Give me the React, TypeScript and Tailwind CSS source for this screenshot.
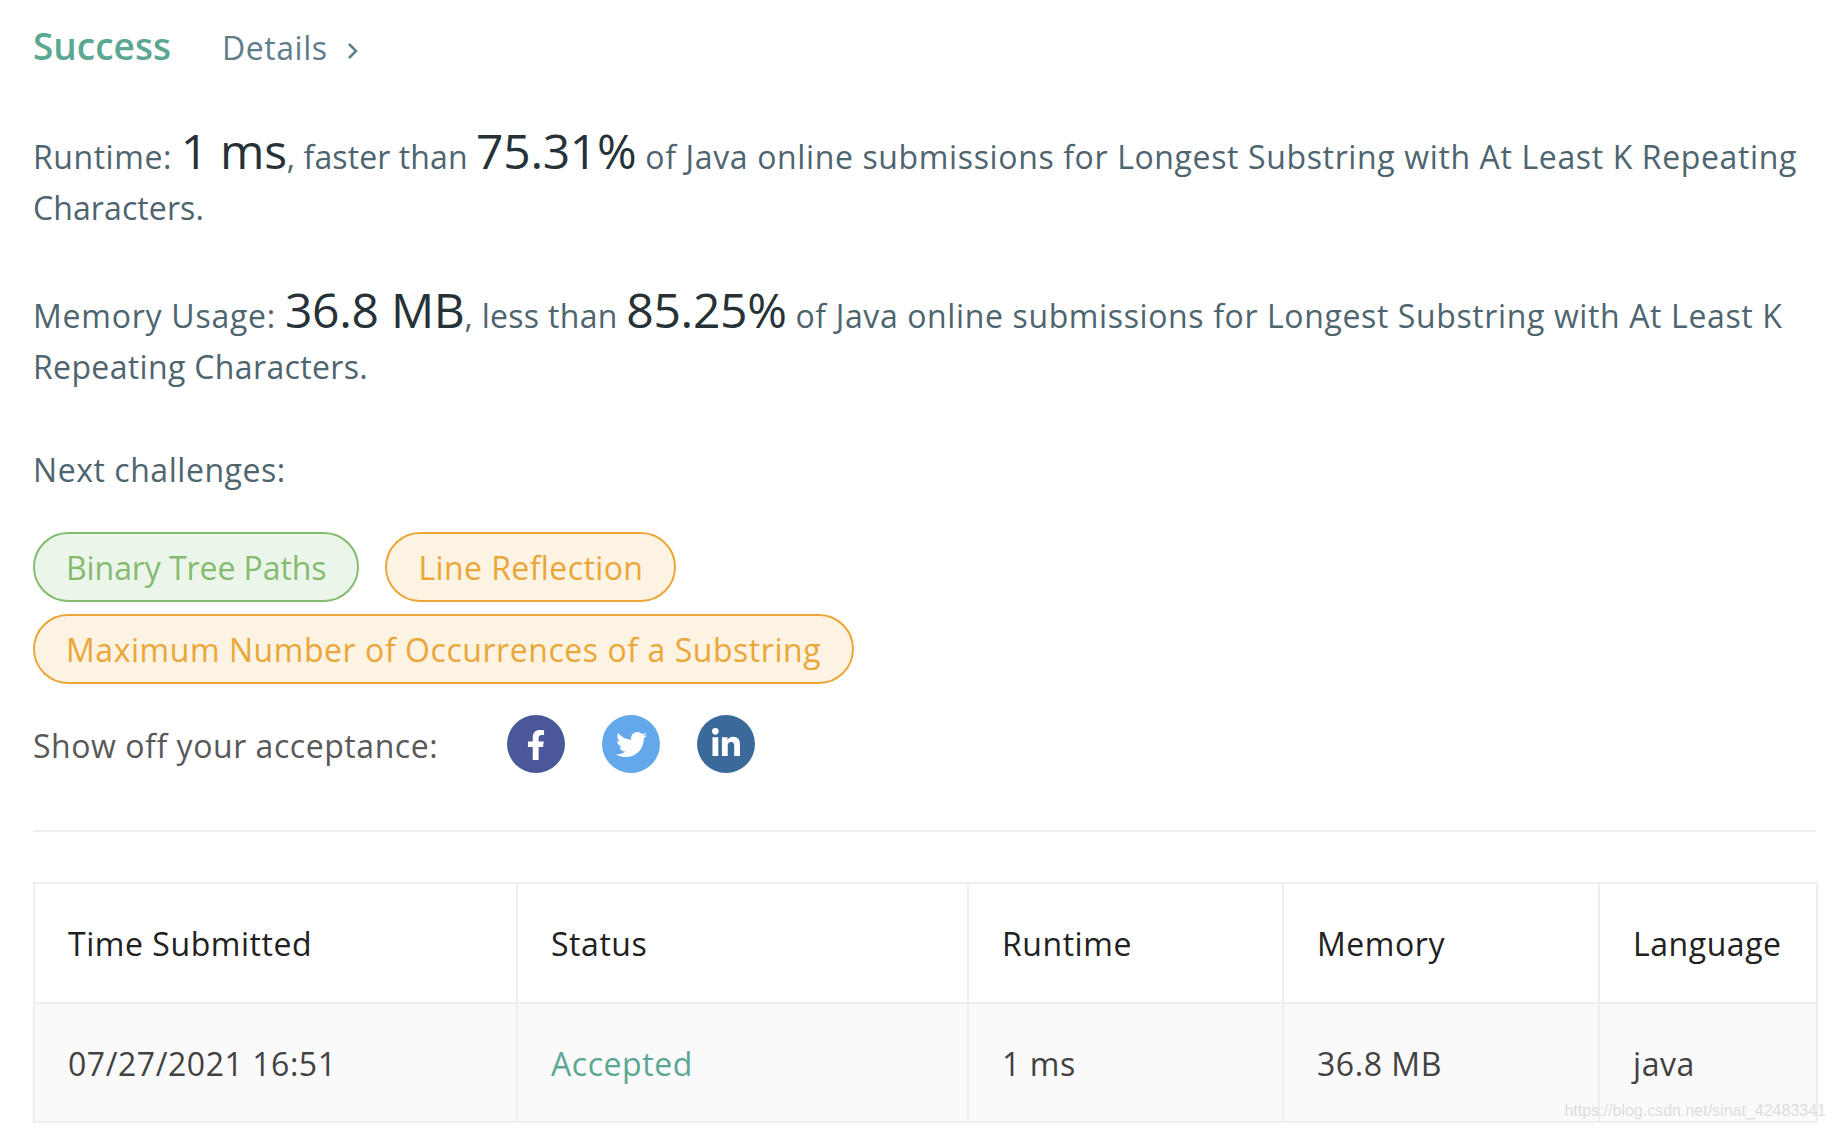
import { FaFacebookF, FaLinkedinIn, FaTwitter } from 'react-icons/fa';

const Big = ({ children }: { children: React.ReactNode }) => (
  <span className="text-[48px] leading-[51px] tracking-[-0.3px] text-[#263238]">{children}</span>
);

const Pill = ({ label, className }: { label: string; className: string }) => (
  <a
    className={`h-[70px] px-[31px] pt-[2px] flex items-center rounded-[35px] border-2 whitespace-nowrap ${className}`}
  >
    {label}
  </a>
);

const App = () => {
  const columns = [
    { title: 'Time Submitted', value: '07/27/2021 16:51', width: 'w-[483px]' },
    { title: 'Status', value: 'Accepted', width: 'w-[451px]' },
    { title: 'Runtime', value: '1 ms', width: 'w-[315px]' },
    { title: 'Memory', value: '36.8 MB', width: 'w-[316px]' },
    { title: 'Language', value: 'java', width: 'w-[218px]' },
  ];

  return (
    <div className="relative w-[1832px] h-[1130px] overflow-hidden bg-white pl-[33px] pr-[16px] pt-[20px] text-[32px] tracking-[0.55px] text-[#4e6570] font-['Open_Sans',sans-serif]">
      <div className="flex items-center h-[54px]">
        <span className="-mt-[2px] text-[37px] tracking-normal font-semibold text-[#5ca793]">Success</span>
        <a className="ml-[51px] mt-[1px] flex items-center text-[#607d8b]">
          Details
          <svg width="12" height="18" viewBox="0 0 12 18" fill="none" className="ml-[19px] mt-[6px]">
            <path d="M2 2l7 7-7 7" stroke="#607d8b" strokeWidth="2.6" />
          </svg>
        </a>
      </div>

      {/* line lengths tuned span by span against the reference */}
      <p className="mt-[51px] w-[1783px] leading-[51px] tracking-[0.63px]">
        <span className="tracking-[0.55px]">Runtime: </span>
        <Big>1 ms</Big>
        <span className="tracking-[0.1px]">, faster than </span>
        <Big>75.31%</Big> of Java online submissions for Longest Substring with At Least K
        Repeating <span className="tracking-[0.1px]">Characters.</span>
      </p>
      <p className="mt-[51px] w-[1783px] leading-[51px] tracking-[0.62px]">
        <span className="tracking-[0.75px]">Memory Usage: </span>
        <Big>36.8 MB</Big>
        <span className="tracking-[0.3px]">, less than </span>
        <Big>85.25%</Big> of Java online submissions for Longest Substring with At Least K{' '}
        <span className="tracking-[0.35px]">Repeating Characters.</span>
      </p>

      <p className="mt-[52px] leading-[51px]">Next challenges:</p>

      <div className="mt-[37px] flex flex-wrap gap-x-[26px] gap-y-[12px] w-[900px]">
        <Pill
          label="Binary Tree Paths"
          className="tracking-[-0.08px] border-[#85bb70] bg-[#ecf5ea] text-[#85bb70]"
        />
        <Pill
          label="Line Reflection"
          className="tracking-[0.4px] border-[#eba638] bg-[#fdf3e2] text-[#eba638]"
        />
        <Pill
          label="Maximum Number of Occurrences of a Substring"
          className="border-[#eba638] bg-[#fdf3e2] text-[#eba638]"
        />
      </div>

      <div className="mt-[31px] flex items-center text-[#595959]">
        <span className="mt-[4px] w-[474px]">Show off your acceptance:</span>
        <div className="flex gap-[37px]">
          <a className="w-[58px] h-[58px] rounded-full bg-[#4a5798] text-white flex items-center justify-center">
            <FaFacebookF size={30} className="mt-[2px]" />
          </a>
          <a className="w-[58px] h-[58px] rounded-full bg-[#62a8ea] text-white flex items-center justify-center">
            <FaTwitter size={31} />
          </a>
          <a className="w-[58px] h-[58px] rounded-full bg-[#3b6a9a] text-white flex items-center justify-center">
            <FaLinkedinIn size={32} />
          </a>
        </div>
      </div>

      <div className="mt-[57px] h-[2px] bg-[#eeeeee]" />

      <table className="mt-[50px] w-[1783px] table-fixed border-collapse border-2 border-[#eeeeee]">
        <thead>
          <tr className="h-[120px]">
            {columns.map((c) => (
              <th
                key={c.title}
                className={`${c.width} border-2 border-[#eeeeee] pl-[33px] pt-[2px] text-left font-normal text-[#212121]`}
              >
                {c.title}
              </th>
            ))}
          </tr>
        </thead>
        <tbody>
          <tr className="h-[119px] bg-[#fafafa]">
            {columns.map((c) => (
              <td
                key={c.title}
                className={`border-2 border-[#eeeeee] pl-[33px] pt-[2px] ${
                  c.value === 'Accepted' ? 'text-[#5ca793]' : 'text-[#424242]'
                }`}
              >
                {c.value}
              </td>
            ))}
          </tr>
        </tbody>
      </table>

      <span className="absolute right-[6px] bottom-[7px] text-[16px] tracking-normal text-[#dddddd] font-['Liberation_Sans',sans-serif]">
        https://blog.csdn.net/sinat_42483341
      </span>
    </div>
  );
};

export default App;
